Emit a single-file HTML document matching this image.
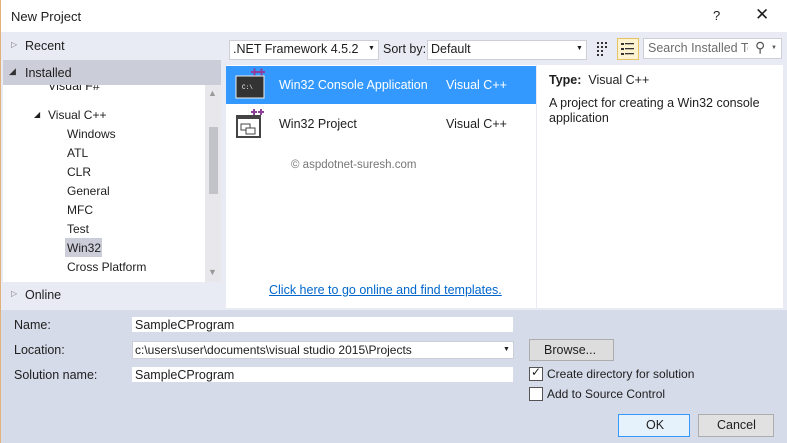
<!DOCTYPE html>
<html><head><style>
body{margin:0;width:787px;height:443px;overflow:hidden;font-family:"Liberation Sans",sans-serif;font-size:12px;color:#1e1e1e;position:relative;background:#fff}
.a{position:absolute}
.t{white-space:nowrap}
</style></head><body>
<div class="a" style="left:0;top:0;width:1px;height:443px;background:#e3b27a"></div>
<div class="a t" style="left:11px;top:9px;font-size:13px">New Project</div>
<div class="a t" style="left:713px;top:8px;font-size:13px">?</div>
<div class="a t" style="left:755px;top:5px;font-size:17px">✕</div>
<div class="a" style="left:1px;top:32px;width:786px;height:278px;background:#e8ebf4"></div>
<!-- left -->
<div class="a t" style="left:11px;top:40px;font-size:8px;color:#777">▷</div>
<div class="a t" style="left:25px;top:39px;font-size:12.5px">Recent</div>
<div class="a" style="left:3px;top:60px;width:218px;height:25px;background:#cbcdd8"></div>
<div class="a t" style="left:9px;top:66px;font-size:9px;color:#333">◢</div>
<div class="a t" style="left:25px;top:66px;font-size:12.5px">Installed</div>
<div class="a" style="left:3px;top:85px;width:202px;height:197px;background:#fff;overflow:hidden">
<div class="a t" style="left:45px;top:-6px;font-size:12.5px">Visual F#</div>
<div class="a t" style="left:31px;top:25px;font-size:8px">◢</div>
<div class="a t" style="left:45px;top:23px;font-size:12px">Visual C++</div>
<div class="a t" style="left:64px;top:42px;font-size:12px">Windows</div>
<div class="a t" style="left:64px;top:61px;font-size:12px">ATL</div>
<div class="a t" style="left:64px;top:80px;font-size:12px">CLR</div>
<div class="a t" style="left:64px;top:99px;font-size:12px">General</div>
<div class="a t" style="left:64px;top:118px;font-size:12px">MFC</div>
<div class="a t" style="left:64px;top:137px;font-size:12px">Test</div>
<div class="a" style="left:62px;top:153px;width:37px;height:19px;background:#cbcdd8"></div>
<div class="a t" style="left:64px;top:156px;font-size:12px">Win32</div>
<div class="a t" style="left:64px;top:175px;font-size:12px">Cross Platform</div>
</div>
<div class="a" style="left:205px;top:85px;width:16px;height:197px;background:#e8e8ec"></div>
<div class="a" style="left:209px;top:127px;width:9px;height:67px;background:#c2c3c9"></div>
<div class="a t" style="left:208px;top:88px;font-size:9px;color:#999">▲</div>
<div class="a t" style="left:208px;top:267px;font-size:9px;color:#999">▼</div>
<div class="a t" style="left:11px;top:289px;font-size:8px;color:#777">▷</div>
<div class="a t" style="left:25px;top:288px;font-size:12.5px">Online</div>
<!-- toolbar -->
<div class="a" style="left:229px;top:40px;width:148px;height:18px;background:#fff;border:1px solid #ccced8"></div>
<div class="a t" style="left:233px;top:42px;font-size:12.5px">.NET Framework 4.5.2</div>
<div class="a t" style="left:368px;top:45px;font-size:7px">▼</div>
<div class="a t" style="left:383px;top:42px;font-size:12.5px">Sort by:</div>
<div class="a" style="left:427px;top:40px;width:158px;height:18px;background:#fff;border:1px solid #ccced8"></div>
<div class="a t" style="left:431px;top:42px;font-size:12.5px">Default</div>
<div class="a t" style="left:576px;top:45px;font-size:7px">▼</div>
<svg class="a" style="left:596px;top:41px" width="14" height="16"><g fill="#333"><rect x="1" y="1" width="2" height="2"/><rect x="5" y="1" width="2" height="2"/><rect x="9" y="1" width="2" height="2"/><rect x="1" y="5" width="2" height="2"/><rect x="5" y="5" width="2" height="2"/><rect x="9" y="5" width="2" height="2"/><rect x="1" y="9" width="2" height="2"/><rect x="5" y="9" width="2" height="2"/><rect x="1" y="13" width="2" height="2"/><rect x="5" y="13" width="2" height="2"/></g></svg>
<div class="a" style="left:617px;top:38px;width:20px;height:20px;background:#fdf3d0;border:1px solid #e5c365"></div>
<svg class="a" style="left:621px;top:42px" width="14" height="14"><g fill="#333"><rect x="0" y="1" width="3" height="2"/><rect x="4" y="1" width="9" height="1.3"/><rect x="0" y="6" width="3" height="2"/><rect x="4" y="6" width="9" height="1.3"/><rect x="0" y="11" width="3" height="2"/><rect x="4" y="11" width="9" height="1.3"/></g></svg>
<div class="a" style="left:643px;top:38px;width:137px;height:19px;background:#fff;border:1px solid #ccced8"></div>
<div class="a t" style="left:648px;top:41px;font-size:12.5px;color:#6d6d6d;width:100px;overflow:hidden">Search Installed Templates</div>
<div class="a t" style="left:755px;top:39px;font-size:14px;color:#555">⚲</div>
<div class="a t" style="left:771px;top:45px;font-size:6px;color:#555">▼</div>
<!-- center -->
<div class="a" style="left:226px;top:65px;width:310px;height:243px;background:#fff"></div>
<div class="a" style="left:226px;top:66px;width:310px;height:38px;background:#3399ff"></div>
<svg class="a" style="left:234px;top:68px" width="34" height="32"><rect x="2" y="8" width="28" height="22" fill="#333" stroke="#eee"/><text x="8" y="21" font-size="6" fill="#fff" font-family="Liberation Mono">C:\</text><g fill="#8e3d9a"><rect x="17" y="3" width="7" height="2"/><rect x="19.5" y="0.5" width="2" height="7"/><rect x="24" y="3" width="7" height="2"/><rect x="26.5" y="0.5" width="2" height="7"/></g></svg>
<div class="a t" style="left:279px;top:78px;font-size:12.5px;color:#fff">Win32 Console Application</div>
<div class="a t" style="left:446px;top:78px;font-size:12.5px;color:#fff">Visual C++</div>
<svg class="a" style="left:234px;top:108px" width="34" height="32"><rect x="3" y="8" width="23" height="21" fill="none" stroke="#444" stroke-width="2"/><rect x="3" y="8" width="23" height="3" fill="#444"/><rect x="7" y="16" width="9" height="6" fill="none" stroke="#444"/><rect x="12" y="20" width="9" height="6" fill="#fff" stroke="#444"/><g fill="#8e3d9a"><rect x="17" y="3" width="6" height="2"/><rect x="19" y="1" width="2" height="6"/><rect x="24" y="3" width="6" height="2"/><rect x="26" y="1" width="2" height="6"/></g></svg>
<div class="a t" style="left:279px;top:117px;font-size:12.5px">Win32 Project</div>
<div class="a t" style="left:446px;top:117px;font-size:12.5px">Visual C++</div>
<div class="a t" style="left:291px;top:159px;font-size:11.5px;color:#777">© aspdotnet-suresh.com</div>
<div class="a t" style="left:269px;top:283px;font-size:12.5px;color:#0066cc;text-decoration:underline">Click here to go online and find templates.</div>
<!-- right -->
<div class="a" style="left:537px;top:65px;width:246px;height:243px;background:#fff"></div>
<div class="a t" style="left:549px;top:73px;font-size:12.5px"><b>Type:</b>&nbsp; Visual C++</div>
<div class="a" style="left:549px;top:96px;width:220px;font-size:12.5px;line-height:15px">A project for creating a Win32 console application</div>
<!-- bottom -->
<div class="a" style="left:1px;top:310px;width:786px;height:133px;background:#d6dbe9"></div>
<div class="a t" style="left:14px;top:318px;font-size:12.5px">Name:</div>
<div class="a" style="left:132px;top:317px;width:381px;height:15px;background:#fff"></div>
<div class="a t" style="left:135px;top:318px;font-size:12.5px">SampleCProgram</div>
<div class="a t" style="left:14px;top:343px;font-size:12.5px">Location:</div>
<div class="a" style="left:132px;top:341px;width:380px;height:16px;background:#fff;border:1px solid #ccced8"></div>
<div class="a t" style="left:135px;top:343px;font-size:12px">c:\users\user\documents\visual studio 2015\Projects</div>
<div class="a t" style="left:503px;top:346px;font-size:7px">▼</div>
<div class="a" style="left:529px;top:339px;width:83px;height:20px;background:#dddddd;border:1px solid #adadad"></div>
<div class="a t" style="left:544px;top:343px;font-size:12.5px">Browse...</div>
<div class="a t" style="left:14px;top:368px;font-size:12.5px">Solution name:</div>
<div class="a" style="left:132px;top:367px;width:381px;height:15px;background:#fff"></div>
<div class="a t" style="left:135px;top:368px;font-size:12.5px">SampleCProgram</div>
<div class="a" style="left:529px;top:367px;width:12px;height:12px;background:#fff;border:1px solid #555"></div>
<div class="a t" style="left:531px;top:365px;font-size:12px">✓</div>
<div class="a t" style="left:547px;top:367px;font-size:12px">Create directory for solution</div>
<div class="a" style="left:529px;top:387px;width:12px;height:12px;background:#fff;border:1px solid #555"></div>
<div class="a t" style="left:547px;top:387px;font-size:12px">Add to Source Control</div>
<div class="a" style="left:618px;top:414px;width:70px;height:21px;background:#e5f1fb;border:1px solid #3399ff"></div>
<div class="a t" style="left:646px;top:418px;font-size:12.5px">OK</div>
<div class="a" style="left:698px;top:414px;width:74px;height:21px;background:#e1e1e1;border:1px solid #adadad"></div>
<div class="a t" style="left:717px;top:418px;font-size:12.5px">Cancel</div>
</body></html>
